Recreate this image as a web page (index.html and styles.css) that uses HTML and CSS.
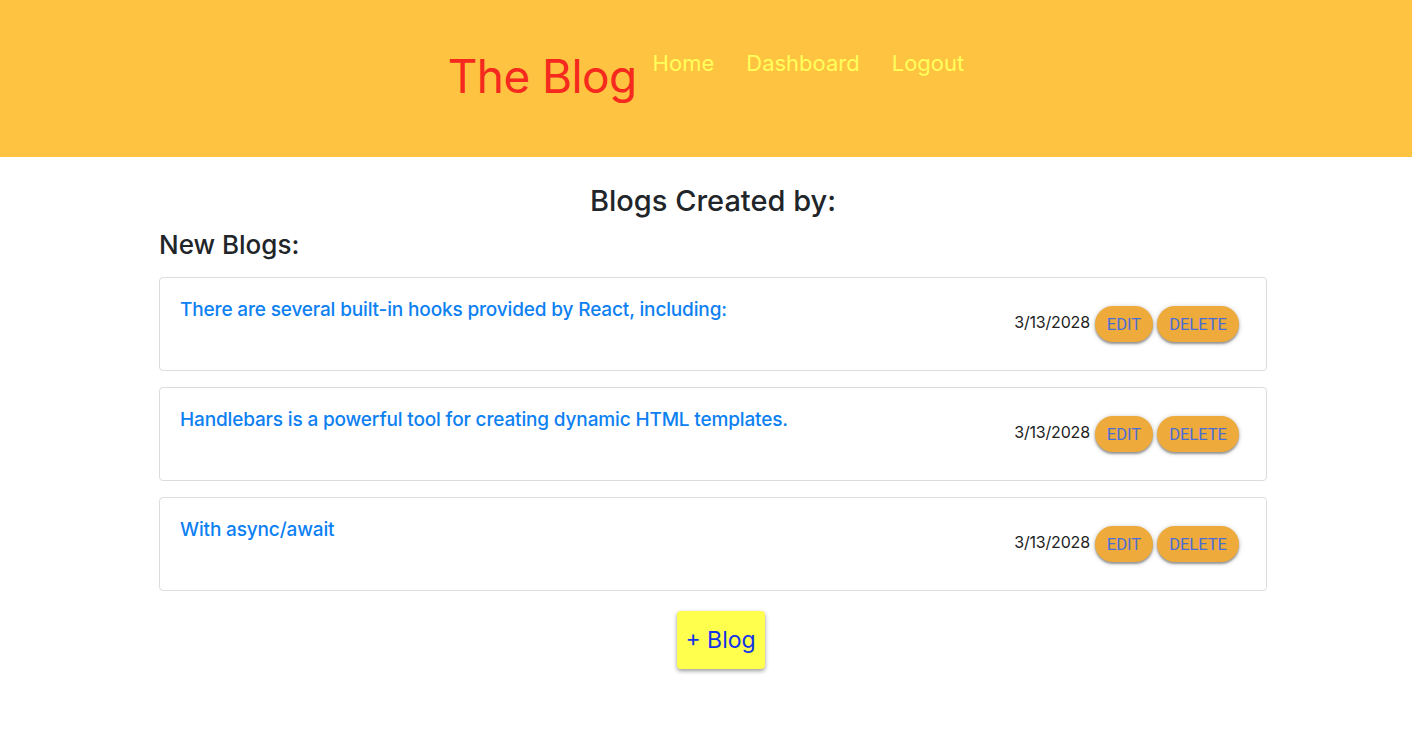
FILE: index.html
```html
<!DOCTYPE html>
<html lang="en">
<head>
    <meta charset="UTF-8">
    <meta name="viewport" content="width=device-width, initial-scale=1.0">
    <title>The Blog</title>
    <link rel="stylesheet" href="styles.css">
</head>
<body>
    <header class="site-header">
        <h1 class="brand">The Blog</h1>
        <nav class="nav">
            <a href="#">Home</a>
            <a href="#">Dashboard</a>
            <a href="#">Logout</a>
        </nav>
    </header>

    <main class="container">
        <h2 class="page-title">Blogs Created by:</h2>
        <h3 class="section-title">New Blogs:</h3>

        <div class="post-list">
            <div class="post-card">
                <a class="post-title" href="#">There are several built-in hooks provided by React, including:</a>
                <div class="post-meta">
                    <span class="post-date">3/13/2028</span>
                    <button class="btn-pill">EDIT</button>
                    <button class="btn-pill">DELETE</button>
                </div>
            </div>
            <div class="post-card">
                <a class="post-title" href="#">Handlebars is a powerful tool for creating dynamic HTML templates.</a>
                <div class="post-meta">
                    <span class="post-date">3/13/2028</span>
                    <button class="btn-pill">EDIT</button>
                    <button class="btn-pill">DELETE</button>
                </div>
            </div>
            <div class="post-card">
                <a class="post-title" href="#">With async/await</a>
                <div class="post-meta">
                    <span class="post-date">3/13/2028</span>
                    <button class="btn-pill">EDIT</button>
                    <button class="btn-pill">DELETE</button>
                </div>
            </div>
        </div>

        <div class="new-post">
            <button class="btn-new">+ Blog</button>
        </div>
    </main>
</body>
</html>
```

FILE: styles.css
```css
body {
    font-family: Inter, "Noto Sans", Arial, sans-serif;
    color: #212529;
    background: #fff;
    margin: 0;
    padding: 0;
}
.site-header {
    background: #fec340;
    height: 157px;
    display: flex;
    justify-content: center;
    align-items: flex-start;
}
.brand {
    color: #f5291d;
    font-size: 46px;
    font-weight: 400;
    margin: 48px 0 0 0;
    line-height: 56px;
    letter-spacing: -0.6px;
}
.nav {
    display: flex;
    gap: 32px;
    margin: 49px 0 0 16px;
}
.nav a {
    color: #ffff5c;
    text-decoration: none;
    font-size: 22px;
    line-height: 28px;
}
.container {
    width: 1108px;
    margin: 0 0 0 159px;
    padding-bottom: 40px;
}
.page-title {
    text-align: center;
    font-size: 29px;
    font-weight: 500;
    margin: 26px 0 0 0;
    line-height: 36px;
}
.section-title {
    font-size: 26px;
    font-weight: 500;
    margin: 10px 0 0 0;
    line-height: 32px;
}
.post-list {
    display: flex;
    flex-direction: column;
    gap: 16px;
    margin-top: 16px;
}
.post-card {
    border: 1px solid #dcdcdc;
    border-radius: 4px;
    height: 94px;
    box-sizing: border-box;
    padding: 20px 27px 0 20px;
    display: flex;
    justify-content: space-between;
    align-items: flex-start;
}
.post-title {
    color: #0d80f2;
    text-decoration: none;
    font-size: 19px;
    font-weight: 500;
    line-height: 24px;
    letter-spacing: -0.15px;
}
.post-meta {
    display: flex;
    align-items: center;
    gap: 4px;
    margin-top: 8px;
}
.post-date {
    font-size: 16px;
    color: #222;
    margin-right: 1px;
    letter-spacing: -0.2px;
    position: relative;
    top: -2px;
}
.btn-pill {
    font-family: Roboto, Arial, sans-serif;
    background: #eeaa3a;
    color: #4b6ed6;
    border: none;
    border-radius: 18px;
    height: 36px;
    padding: 0 12px;
    font-size: 16.5px;
    box-shadow: 0 2px 2px rgba(0, 0, 0, 0.3), 0 1px 5px rgba(0, 0, 0, 0.25);
    cursor: pointer;
}
.new-post {
    display: flex;
    justify-content: center;
    margin-top: 20px;
}
.btn-new {
    font-family: Inter, Arial, sans-serif;
    background: #ffff4d;
    color: #1233e8;
    border: none;
    border-radius: 4px;
    width: 88px;
    height: 58px;
    font-size: 23px;
    margin-left: 15px;
    box-shadow: 0 2px 4px rgba(0, 0, 0, 0.4);
    cursor: pointer;
}
```
